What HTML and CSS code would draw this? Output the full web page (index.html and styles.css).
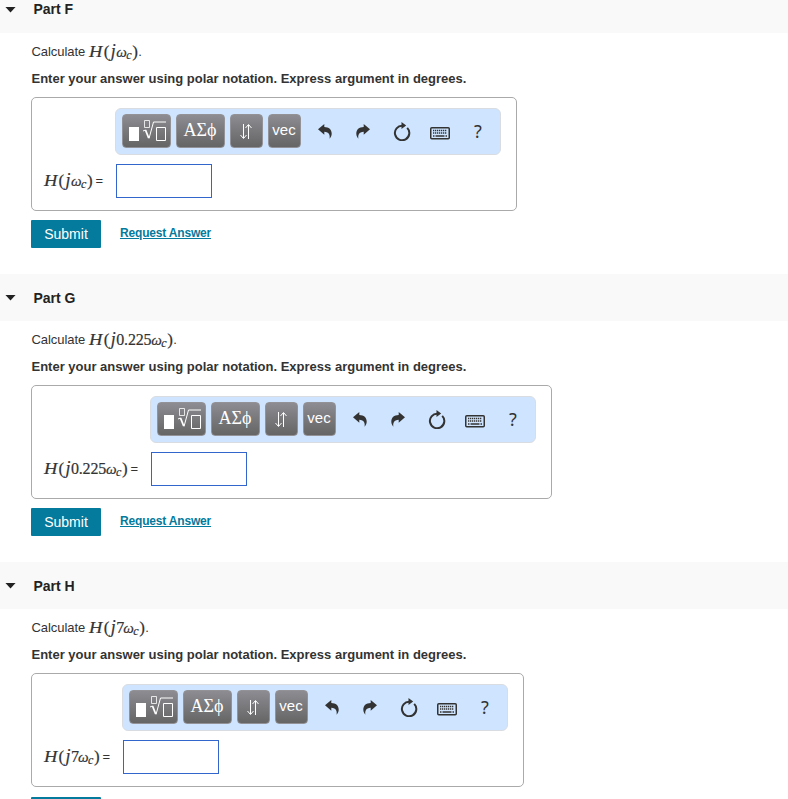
FILE: index.html
```
<!DOCTYPE html>
<html lang="en">
<head>
<meta charset="utf-8">
<title>Exercise</title>
<link rel="stylesheet" href="styles.css">
</head>
<body>
<svg class="defs" aria-hidden="true">
  <symbol id="template" viewBox="0 0 49 34">
    <path d="M7 13h10v14H7z" fill="#fff"/>
    <g fill="none" stroke="#fff"><path d="M22.500 6.500h5v7h-5z" opacity=".8"/><path d="M21 17l2.500-1"/><path d="M23.500 16l3.200 8" stroke-width="1.800"/><path d="M27 24.500L31.500 8H44"/><path d="M34.500 13.500h9v13h-9z"/></g>
  </symbol>
  <symbol id="arrows" viewBox="0 0 33 34">
    <g fill="none" stroke="#fff"><path d="M13.500 10v14M10.500 21l3 3.500 3-3.500M18.500 25V11M15.500 14l3-3.500 3 3.500"/></g>
  </symbol>
  <symbol id="undo" viewBox="0 0 16 16">
    <path d="M1 6.200L7.300 1v3C12 4 14.700 6.800 14.700 10.500c0 2.100-.7 3.700-2.100 5.200.6-3.800-.5-6.700-5.300-7v3z"/>
  </symbol>
  <symbol id="reset" viewBox="0 0 18 20">
    <path d="M14.200 6.900A7.200 7.200 0 1 1 9.500 4.800" fill="none" stroke="#333" stroke-width="2"/><path d="M8.500 1l4.700 3.600-4.700 3.400z"/>
  </symbol>
  <symbol id="keys" viewBox="0 0 20 13">
    <rect x=".75" y=".75" width="18.500" height="11" rx="1" fill="none" stroke="#333" stroke-width="1.500"/>
    <path d="M3 3.500h14M3 6h14" fill="none" stroke="#333" stroke-width="1.300" stroke-dasharray="1.300 .7"/>
    <path d="M3 9h1.500M5.500 9h9M15.500 9H17" fill="none" stroke="#333" stroke-width="1.300"/>
  </symbol>
</svg>
<main>
  <section class="part">
    <header class="head first"><i class="caret"></i><h2>Part F</h2></header>
    <div class="body">
      <p class="prompt">Calculate <span class="math"><i class="h">H</i><b>(</b><i class="j">j</i><i class="w">ω</i><i class="c">c</i><b>)</b></span>.</p>
      <p class="hint">Enter your answer using polar notation. Express argument in degrees.</p>
      <div class="answer">
        <div class="label"><span class="math"><i class="h">H</i><b>(</b><i class="j">j</i><i class="w">ω</i><i class="c">c</i><b>)</b></span><span class="eq">=</span></div>
        <div class="editor">
          <div class="toolbar">
            <button class="tool wide"><svg><use href="#template"/></svg></button><button class="tool wide greek">ΑΣϕ</button><button class="tool"><svg><use href="#arrows"/></svg></button><button class="tool vec">vec</button>
            <div class="icons"><span><svg class="turn"><use href="#undo"/></svg></span><span><svg class="turn flip"><use href="#undo"/></svg></span><span><svg class="reset"><use href="#reset"/></svg></span><span><svg class="keys"><use href="#keys"/></svg></span><span class="help">?</span></div>
          </div>
          <input class="field" aria-label="Answer">
        </div>
      </div>
      <div class="actions"><button class="submit">Submit</button><a class="request">Request Answer</a></div>
    </div>
  </section>
  <section class="part">
    <header class="head"><i class="caret"></i><h2>Part G</h2></header>
    <div class="body">
      <p class="prompt">Calculate <span class="math"><i class="h">H</i><b>(</b><i class="j">j</i><span class="n">0.225</span><i class="w">ω</i><i class="c">c</i><b>)</b></span>.</p>
      <p class="hint">Enter your answer using polar notation. Express argument in degrees.</p>
      <div class="answer">
        <div class="label mid"><span class="math"><i class="h">H</i><b>(</b><i class="j">j</i><span class="n">0.225</span><i class="w">ω</i><i class="c">c</i><b>)</b></span><span class="eq">=</span></div>
        <div class="editor">
          <div class="toolbar">
            <button class="tool wide"><svg><use href="#template"/></svg></button><button class="tool wide greek">ΑΣϕ</button><button class="tool"><svg><use href="#arrows"/></svg></button><button class="tool vec">vec</button>
            <div class="icons"><span><svg class="turn"><use href="#undo"/></svg></span><span><svg class="turn flip"><use href="#undo"/></svg></span><span><svg class="reset"><use href="#reset"/></svg></span><span><svg class="keys"><use href="#keys"/></svg></span><span class="help">?</span></div>
          </div>
          <input class="field" aria-label="Answer">
        </div>
      </div>
      <div class="actions"><button class="submit">Submit</button><a class="request">Request Answer</a></div>
    </div>
  </section>
  <section class="part last">
    <header class="head"><i class="caret"></i><h2>Part H</h2></header>
    <div class="body">
      <p class="prompt">Calculate <span class="math"><i class="h">H</i><b>(</b><i class="j">j</i><span class="n one">7</span><i class="w">ω</i><i class="c">c</i><b>)</b></span>.</p>
      <p class="hint">Enter your answer using polar notation. Express argument in degrees.</p>
      <div class="answer">
        <div class="label short"><span class="math"><i class="h">H</i><b>(</b><i class="j">j</i><span class="n one">7</span><i class="w">ω</i><i class="c">c</i><b>)</b></span><span class="eq">=</span></div>
        <div class="editor">
          <div class="toolbar">
            <button class="tool wide"><svg><use href="#template"/></svg></button><button class="tool wide greek">ΑΣϕ</button><button class="tool"><svg><use href="#arrows"/></svg></button><button class="tool vec">vec</button>
            <div class="icons"><span><svg class="turn"><use href="#undo"/></svg></span><span><svg class="turn flip"><use href="#undo"/></svg></span><span><svg class="reset"><use href="#reset"/></svg></span><span><svg class="keys"><use href="#keys"/></svg></span><span class="help">?</span></div>
          </div>
          <input class="field" aria-label="Answer">
        </div>
      </div>
      <div class="actions"><button class="submit"></button></div>
    </div>
  </section>
</main>
</body>
</html>
```
FILE: styles.css
```
* { box-sizing: border-box; }
body {
  margin: 0;
  background: #fff;
  color: #333;
  font: 13px/18px "Liberation Sans", Arial, sans-serif;
}
.defs { display: none; }
main { margin-top: -14px; }
.part { height: 288px; }
.part.last { height: 237px; overflow: hidden; }
.head {
  display: flex;
  align-items: center;
  height: 47px;
  padding-left: 5px;
  background: #f9f9f9;
}
.caret {
  width: 11px;
  height: 6px;
  margin-right: 17.500px;
  background: #222;
  clip-path: polygon(0 0, 100% 0, 50% 100%);
}
h2 { margin: 1px 0 0; font-size: 14px; color: #222; }
.first h2 { margin-top: -1px; }
.body { padding: 8px 31px 0; }
p { margin: 0 0 0 .5px; height: 18px; white-space: nowrap; }
.prompt { margin-bottom: 11px; word-spacing: .5px; letter-spacing: -.05px; }
.hint { font-weight: bold; margin-bottom: 9px; }
.math {
  display: inline-flex;
  align-items: baseline;
  height: 18px;
  font: 17px/18px "Liberation Serif", serif;
  letter-spacing: 0;
  vertical-align: baseline;
  -webkit-text-stroke: .2px #333;
}
.prompt .math { transform: translateY(.6px); }
.math b { width: 6px; font-weight: normal; font-size: 17px; }
.math .h { width: 14.500px; font-size: 16px; transform: scaleX(1.15); transform-origin: left; }
.math .j { width: 6.500px; padding-left: 1px; font-size: 18px; }
.math .w { width: 10px; font-size: 15px; }
.math .c { width: 6px; font-size: 12px; position: relative; top: 2px; }
.math .n { width: 35px; font-size: 16px; letter-spacing: -.2px; }
.math .one { width: 7px; }
.answer {
  display: flex;
  width: max-content;
  height: 114px;
  padding: 10px 15px 0 12px;
  border: 1px solid #aaa;
  border-radius: 5px;
}
.label { width: 71px; padding-top: 63px; white-space: nowrap; }
.label.mid { width: 106px; }
.label.short { width: 78px; }
.eq { display: inline-block; margin-left: 2.500px; transform: translateY(-1px); }
.toolbar {
  display: flex;
  width: 386px;
  height: 47px;
  padding: 5px 6px;
  gap: 5px;
  border: 1px solid #d9dde2;
  border-radius: 6px;
  background: #cfe5ff;
}
button { border: 0; padding: 0; font-family: inherit; color: #fff; }
.tool {
  flex: none;
  width: 33px;
  height: 34px;
  border: 1px solid #929297;
  border-radius: 4px;
  background: linear-gradient(#8c8c92, #656565);
  font-size: 15px;
}
.tool svg { display: block; width: 33px; height: 34px; margin: -1px; }
.tool.wide, .wide svg { width: 49px; }
.greek { font: 18px/26px "Liberation Serif", serif; padding: 0 1px 2px 0; }
.vec { padding: 0 1px 3px 0; }
.icons { display: flex; flex: none; width: 191px; height: 34px; }
.icons span { display: flex; flex: 0 0 38.200px; justify-content: center; align-items: center; }
.icons svg { fill: #333; }
.turn { width: 16px; height: 16px; }
.flip { transform: scaleX(-1); }
.reset { width: 18px; height: 20px; margin: -1px 0 0 1px; }
.keys { width: 20px; height: 13px; margin-top: 4px; }
.icons .help { font: 18px "Noto Sans", sans-serif; }
.field {
  display: block;
  width: 96px;
  height: 34px;
  margin: 9px 0 0 1px;
  border: 1px solid #36c;
  background: #fff;
}
.actions { display: flex; margin-top: 9px; }
.last .actions { margin-top: 10px; }
.submit { width: 70px; height: 28px; background: #047a9c; font-size: 14px; border-radius: 1px; }
.request { margin: 4px 0 0 19px; color: #047a9c; font-size: 12px; font-weight: bold; letter-spacing: -.18px; text-decoration: underline; }
```
